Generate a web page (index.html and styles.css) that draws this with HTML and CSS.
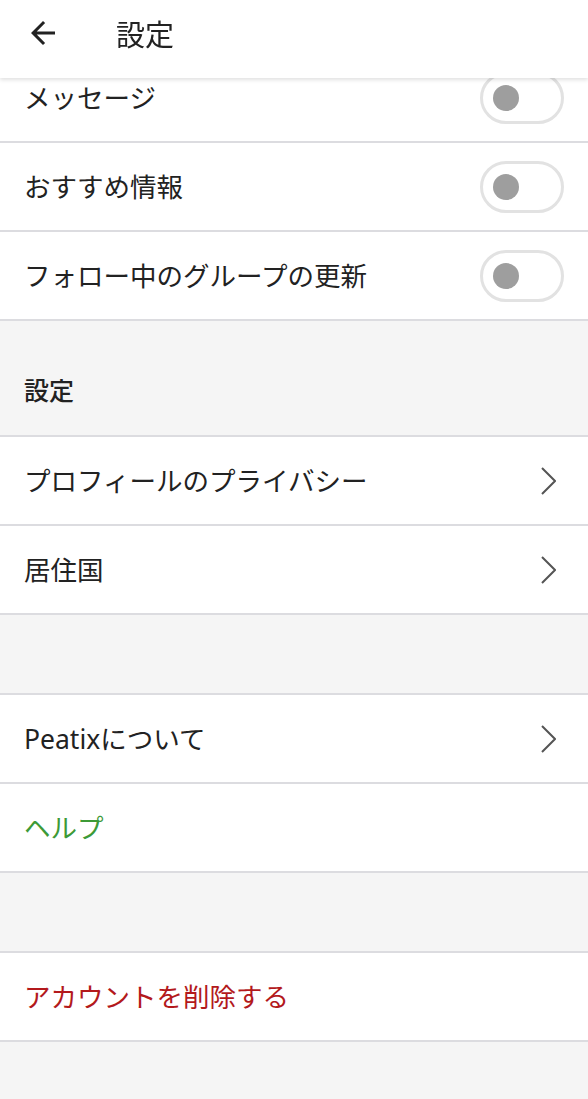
FILE: index.html
```html
<!DOCTYPE html>
<html lang="ja">
<head>
    <meta charset="UTF-8">
    <meta name="viewport" content="width=device-width, initial-scale=1.0">
    <title>設定</title>
    <link rel="stylesheet" href="styles.css">
</head>
<body>
    <header class="top-bar">
        <svg class="back-icon" viewBox="0 0 24 24" width="36" height="36">
            <path d="M20 11H7.83l5.59-5.59L12 4l-8 8 8 8 1.41-1.41L7.83 13H20v-2z" fill="#222"/>
        </svg>
        <div class="title">設定</div>
    </header>

    <div class="page">
        <div class="group">
            <div class="row">
                <span class="label">メッセージ</span>
                <div class="toggle"><div class="knob"></div></div>
            </div>
            <div class="row">
                <span class="label">おすすめ情報</span>
                <div class="toggle"><div class="knob"></div></div>
            </div>
            <div class="row">
                <span class="label">フォロー中のグループの更新</span>
                <div class="toggle"><div class="knob"></div></div>
            </div>
        </div>

        <div class="section-title">設定</div>

        <div class="group">
            <div class="row">
                <span class="label">プロフィールのプライバシー</span>
                <svg class="chevron" viewBox="0 0 16 30" width="16" height="30">
                    <polyline points="2,2 15,15 2,28" fill="none" stroke="#555" stroke-width="2"/>
                </svg>
            </div>
            <div class="row">
                <span class="label">居住国</span>
                <svg class="chevron" viewBox="0 0 16 30" width="16" height="30">
                    <polyline points="2,2 15,15 2,28" fill="none" stroke="#555" stroke-width="2"/>
                </svg>
            </div>
        </div>

        <div class="spacer"></div>

        <div class="group bordered">
            <div class="row">
                <span class="label">Peatixについて</span>
                <svg class="chevron" viewBox="0 0 16 30" width="16" height="30">
                    <polyline points="2,2 15,15 2,28" fill="none" stroke="#555" stroke-width="2"/>
                </svg>
            </div>
            <div class="row">
                <span class="label help">ヘルプ</span>
            </div>
        </div>

        <div class="spacer"></div>

        <div class="group bordered">
            <div class="row">
                <span class="label danger">アカウントを削除する</span>
            </div>
        </div>
    </div>
</body>
</html>
```

FILE: styles.css
```css
body {
    margin: 0;
    padding: 0;
    background-color: #f5f5f5;
    color: #222;
    font-family: "Noto Sans", "Noto Sans CJK JP", sans-serif;
}
.top-bar {
    position: fixed;
    top: 0;
    left: 0;
    right: 0;
    height: 78px;
    background-color: #fff;
    display: flex;
    align-items: center;
    box-shadow: 0 2px 4px rgba(0, 0, 0, 0.12);
    z-index: 10;
}
.back-icon {
    margin-left: 25px;
    margin-top: -12px;
}
.title {
    margin-left: 55px;
    margin-top: -12px;
    font-size: 29px;
}
.page {
    padding-top: 54px;
}
.group {
    background-color: #fff;
}
.group.bordered {
    border-top: 2px solid #dcdce0;
}
.row {
    height: 87px;
    border-bottom: 2px solid #dcdce0;
    display: flex;
    align-items: center;
    justify-content: space-between;
    padding: 0 24px;
}
.label {
    font-size: 26.5px;
    line-height: 30px;
}
.help {
    color: #3d9a37;
}
.danger {
    color: #b3191c;
}
.toggle {
    width: 78px;
    height: 46px;
    border: 3px solid #e2e2e2;
    border-radius: 26px;
    background-color: #fff;
    display: flex;
    align-items: center;
}
.knob {
    width: 26px;
    height: 26px;
    border-radius: 50%;
    background-color: #9e9e9e;
    margin-left: 10px;
}
.chevron {
    margin-right: 8px;
}
.section-title {
    height: 116px;
    box-sizing: border-box;
    border-bottom: 2px solid #dcdce0;
    display: flex;
    align-items: flex-end;
    padding: 0 24px 30px;
    font-size: 25px;
    font-weight: 500;
    line-height: 30px;
}
.spacer {
    height: 78px;
}
```
